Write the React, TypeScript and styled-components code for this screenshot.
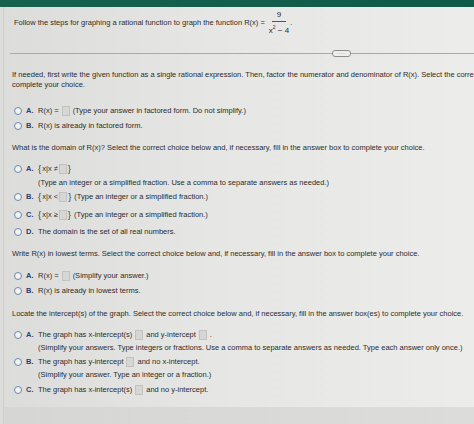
import styled, { createGlobalStyle } from "styled-components";

const GlobalStyle = createGlobalStyle`
    html, body {
        margin: 0;
        padding: 0;
        background: #e4e4e2;
    }
`;

const Page = styled.div`
    width: 474px;
    height: 424px;
    overflow: hidden;
    display: flex;
    flex-direction: column;
    background: linear-gradient(90deg, #dcdddb 0%, #e6e6e4 45%, #ececea 100%);
    font-family: "Liberation Sans", Arial, sans-serif;
    font-size: 7.5px;
    color: #2c2c2c;
`;

const TopBar = styled.div`
    height: 7px;
    flex: none;
    background: linear-gradient(90deg, #17624f, #0f5a48);
`;

const Panel = styled.div`
    flex: 1;
    margin-left: 3px;
    border-left: 1px solid #cfcfcd;
    display: flex;
    flex-direction: column;
`;

const Header = styled.div`
    display: flex;
    align-items: center;
    padding-left: 10px;
    height: 30px;
    white-space: nowrap;
`;

const Fraction = styled.span`
    display: inline-flex;
    flex-direction: column;
    align-items: center;
    margin: 2px 1px 0 4px;
    line-height: 8px;
    font-size: 8px;
    span:first-child {
        padding: 0 5px 2px;
        border-bottom: 1px solid #555;
    }
    span:last-child {
        padding-top: 5px;
    }
    sup {
        font-size: 5px;
        line-height: 0;
        vertical-align: 4px;
    }
`;

const Divider = styled.div`
    position: relative;
    margin: 16px 0 0 6px;
    height: 1px;
    background: #a9aaa8;
`;

const Pill = styled.div`
    position: absolute;
    left: 322px;
    top: -3px;
    width: 17px;
    height: 5px;
    border: 1px solid #8d8e8c;
    border-radius: 3px;
    background: #eeeeec;
    font-size: 5px;
    line-height: 3px;
    text-align: center;
    color: #777;
    letter-spacing: 0.5px;
`;

const Body = styled.div`
    padding: 16px 0 0 8px;
    display: flex;
    flex-direction: column;
`;

const Question = styled.div<{ $top?: number }>`
    margin-top: ${(p) => p.$top ?? 0}px;
    line-height: 10px;
    white-space: nowrap;
`;

const Options = styled.div<{ $top: number }>`
    margin-top: ${(p) => p.$top}px;
    display: flex;
    flex-direction: column;
`;

const Option = styled.div<{ $h: number }>`
    display: flex;
    align-items: flex-start;
    height: ${(p) => p.$h}px;
`;

const Radio = styled.span`
    flex: none;
    box-sizing: border-box;
    width: 8px;
    height: 8px;
    margin: 3px 4px 0 2px;
    border: 1px solid #6f86ab;
    border-radius: 50%;
    background: #f1f2f2;
`;

const Letter = styled.span`
    flex: none;
    width: 12px;
    font-weight: bold;
    color: #2c3f6e;
    line-height: 14px;
`;

const OptionBody = styled.div`
    display: flex;
    flex-direction: column;
    line-height: 14px;
    white-space: nowrap;
`;

const Line = styled.div`
    display: flex;
    align-items: center;
    gap: 3px;
    height: 14px;
`;

const Note = styled.div<{ $h: number }>`
    line-height: ${(p) => p.$h}px;
`;

const Box = styled.span`
    display: inline-block;
    width: 8px;
    height: 10px;
    background: #d6d6d4;
    border: 1px solid #c2c2c0;
    box-sizing: border-box;
`;

const Set = styled.span`
    display: inline-flex;
    align-items: center;
    gap: 1px;
    b {
        font-weight: normal;
        font-size: 9.5px;
        color: #4a4a4a;
    }
`;

const BottomBand = styled.div`
    margin-top: auto;
    height: 17px;
    background: linear-gradient(90deg, #d6d6d4, #dcdcda);
`;

const SetExpr = ({ op }: { op: string }) => (
    <Set>
        <b>{"{"}</b>x|x {op}<Box /><b>{"}"}</b>
    </Set>
);

export default function App() {
    return (
        <Page>
            <GlobalStyle />
            <TopBar />
            <Panel>
                <Header>
                    Follow the steps for graphing a rational function to graph the function R(x) =
                    <Fraction>
                        <span>9</span>
                        <span>x<sup>2</sup> − 4</span>
                    </Fraction>
                    .
                </Header>
                <Divider>
                    <Pill>.....</Pill>
                </Divider>
                <Body>
                    <Question>
                        If needed, first write the given function as a single rational expression. Then, factor the numerator and denominator of R(x). Select the correct choice below and, if necessary, fill in the answer box to
                        <br />
                        complete your choice.
                    </Question>
                    <Options $top={14}>
                        <Option $h={15}>
                            <Radio /><Letter>A.</Letter>
                            <OptionBody>
                                <Line>R(x) = <Box /> (Type your answer in factored form. Do not simplify.)</Line>
                            </OptionBody>
                        </Option>
                        <Option $h={15}>
                            <Radio /><Letter>B.</Letter>
                            <OptionBody>R(x) is already in factored form.</OptionBody>
                        </Option>
                    </Options>

                    <Question $top={9}>
                        What is the domain of R(x)? Select the correct choice below and, if necessary, fill in the answer box to complete your choice.
                    </Question>
                    <Options $top={9}>
                        <Option $h={28}>
                            <Radio /><Letter>A.</Letter>
                            <OptionBody>
                                <Line><SetExpr op="≠" /></Line>
                                <Note $h={14}>(Type an integer or a simplified fraction. Use a comma to separate answers as needed.)</Note>
                            </OptionBody>
                        </Option>
                        <Option $h={18}>
                            <Radio /><Letter>B.</Letter>
                            <OptionBody>
                                <Line><SetExpr op="<" /> (Type an integer or a simplified fraction.)</Line>
                            </OptionBody>
                        </Option>
                        <Option $h={17}>
                            <Radio /><Letter>C.</Letter>
                            <OptionBody>
                                <Line><SetExpr op="≥" /> (Type an integer or a simplified fraction.)</Line>
                            </OptionBody>
                        </Option>
                        <Option $h={15}>
                            <Radio /><Letter>D.</Letter>
                            <OptionBody>The domain is the set of all real numbers.</OptionBody>
                        </Option>
                    </Options>

                    <Question $top={9}>
                        Write R(x) in lowest terms. Select the correct choice below and, if necessary, fill in the answer box to complete your choice.
                    </Question>
                    <Options $top={10}>
                        <Option $h={15}>
                            <Radio /><Letter>A.</Letter>
                            <OptionBody>
                                <Line>R(x) = <Box /> (Simplify your answer.)</Line>
                            </OptionBody>
                        </Option>
                        <Option $h={15}>
                            <Radio /><Letter>B.</Letter>
                            <OptionBody>R(x) is already in lowest terms.</OptionBody>
                        </Option>
                    </Options>

                    <Question $top={10}>
                        Locate the intercept(s) of the graph. Select the correct choice below and, if necessary, fill in the answer box(es) to complete your choice.
                    </Question>
                    <Options $top={9}>
                        <Option $h={27}>
                            <Radio /><Letter>A.</Letter>
                            <OptionBody>
                                <Line>The graph has x-intercept(s) <Box /> and y-intercept <Box />.</Line>
                                <Note $h={12}>(Simplify your answers. Type integers or fractions. Use a comma to separate answers as needed. Type each answer only once.)</Note>
                            </OptionBody>
                        </Option>
                        <Option $h={28}>
                            <Radio /><Letter>B.</Letter>
                            <OptionBody>
                                <Line>The graph has y-intercept <Box /> and no x-intercept.</Line>
                                <Note $h={12}>(Simplify your answer. Type an integer or a fraction.)</Note>
                            </OptionBody>
                        </Option>
                        <Option $h={15}>
                            <Radio /><Letter>C.</Letter>
                            <OptionBody>
                                <Line>The graph has x-intercept(s) <Box /> and no y-intercept.</Line>
                            </OptionBody>
                        </Option>
                    </Options>
                </Body>
                <BottomBand />
            </Panel>
        </Page>
    );
}
